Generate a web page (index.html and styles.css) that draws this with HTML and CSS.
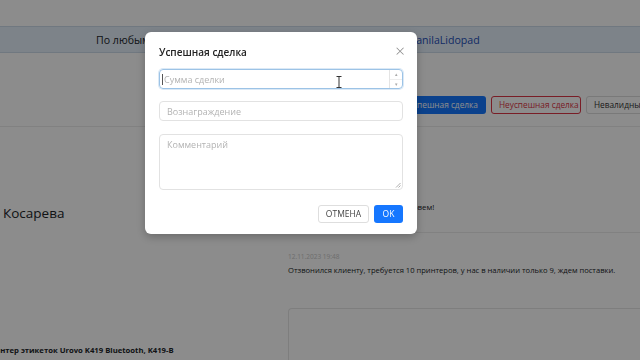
FILE: index.html
```html
<!DOCTYPE html>
<html lang="ru">
<head>
    <meta charset="UTF-8">
    <title>Сделка</title>
    <link rel="stylesheet" href="styles.css">
</head>
<body>
<div class="page">
    <div class="notice">По любым вопросам и предложениям пишите в телеграм <a href="javascript:;">@DanilaLidopad</a></div>
    <div class="actions">
        <a href="javascript:;" class="btn btn-success">Успешная сделка</a>
        <a href="javascript:;" class="btn btn-fail">Неуспешная сделка</a>
        <a href="javascript:;" class="btn btn-invalid">Невалидные</a>
    </div>
    <div class="content">
        <div class="left">
            <h2 class="client">Косарева</h2>
            <div class="product">Принтер этикеток Urovo K419 Bluetooth, K419-B</div>
        </div>
        <div class="right">
            <div class="comment first">
                <div class="comment-text">Договорились о цене, скоро позовем!</div>
            </div>
            <div class="comment">
                <div class="comment-date">12.11.2023 19:48</div>
                <div class="comment-text">Отзвонился клиенту, требуется 10 принтеров, у нас в наличии только 9, ждем поставки.</div>
            </div>
            <div class="comment-box"></div>
        </div>
    </div>
</div>

<div class="overlay">
    <div class="modal">
        <div class="modal-head">
            <span class="modal-title">Успешная сделка</span>
            <span class="close">&times;</span>
        </div>
        <div class="field focused">
            <span class="caret"></span>
            <span class="ph">Сумма сделки</span>
            <span class="spin"><i>&#9652;</i><i>&#9662;</i></span>
            <svg class="ibeam" width="6" height="12" viewBox="0 0 6 12"><path d="M0.5 0.5h5M3 0.5v11M0.5 11.5h5" stroke="#333" stroke-width="1" fill="none"/></svg>
        </div>
        <div class="field">
            <span class="ph">Вознаграждение</span>
        </div>
        <div class="field area">
            <span class="ph">Комментарий</span>
            <svg class="grip" width="6" height="6" viewBox="0 0 6 6"><path d="M5.5 1L1 5.5M5.5 3.5L3.5 5.5" stroke="#999" stroke-width="0.8"/></svg>
        </div>
        <div class="modal-foot">
            <a href="javascript:;" class="mbtn cancel">ОТМЕНА</a>
            <a href="javascript:;" class="mbtn ok">OK</a>
        </div>
    </div>
</div>
</body>
</html>
```

FILE: styles.css
```css
* {
    margin: 0;
    padding: 0;
    box-sizing: border-box;
}

a {
    text-decoration: none;
}

body {
    width: 640px;
    height: 360px;
    overflow: hidden;
    font-family: "Open Sans", "Noto Sans", sans-serif;
    color: #212529;
    background: #fff;
}

.page {
    padding-top: 26px;
}

.notice {
    height: 27px;
    line-height: 26px;
    padding-left: 96px;
    font-size: 10.6px;
    white-space: nowrap;
    background: #e4eef9;
    border-top: 1px solid #cddbe9;
    border-bottom: 1px solid #cddbe9;
}

.notice a {
    color: #1d4fb8;
}

.actions {
    display: flex;
    gap: 5px;
    padding-left: 400px;
    margin-top: 43px;
    height: 18px;
    white-space: nowrap;
}

.btn {
    display: block;
    height: 18px;
    line-height: 16px;
    padding: 0 7px;
    font-size: 8.3px;
    border: 1px solid transparent;
    border-radius: 3px;
}

.btn-success {
    background: #1477ff;
    color: #fff;
    width: 87px;
    text-align: right;
}

.btn-fail {
    color: #dc3545;
    border-color: #dc3545;
    width: 90px;
    text-align: center;
}

.btn-invalid {
    color: #333;
    border-color: #dcdcdc;
    width: 70px;
}

.content {
    display: grid;
    grid-template-columns: 288px 1fr;
    margin-top: 12px;
    border-top: 1px solid #ececec;
}

.left {
    display: flex;
    flex-direction: column;
}

.client {
    font-size: 13.5px;
    font-weight: 400;
    margin-top: 77px;
    padding-left: 3px;
    white-space: nowrap;
}

.product {
    margin-top: 123px;
    font-size: 7.7px;
    font-weight: 700;
    white-space: nowrap;
    text-indent: -16px;
}

.right {
    padding-top: 71px;
}

.comment {
    font-size: 7.6px;
}

.comment.first {
    font-size: 7.9px;
    padding-bottom: 19px;
    border-bottom: 1px solid #ececec;
}

.comment-date {
    margin-top: 19px;
    font-size: 6.5px;
    color: #c8c8c8;
}

.comment-text {
    margin-top: 3px;
    line-height: 12px;
    white-space: nowrap;
}

.comment-box {
    margin-top: 32px;
    height: 80px;
    border: 1px solid #e6e6e6;
    border-right: 0;
    border-radius: 4px 0 0 4px;
}

.overlay {
    position: fixed;
    left: 0;
    top: 0;
    width: 640px;
    height: 360px;
    background: rgba(0, 0, 0, 0.45);
}

.modal {
    position: absolute;
    left: 145px;
    top: 32px;
    width: 272px;
    height: 202px;
    padding: 9px 14px 12px;
    background: #fff;
    border-radius: 6px;
    box-shadow: 0 3px 10px rgba(0, 0, 0, 0.25);
}

.modal-head {
    display: flex;
    justify-content: space-between;
    align-items: center;
    height: 18px;
}

.modal-title {
    font-size: 10px;
    font-weight: 600;
    color: #222;
    margin-top: 3px;
}

.close {
    font-size: 17px;
    font-weight: 300;
    line-height: 1;
    color: #888;
    margin-right: -2px;
}

.field {
    position: relative;
    display: flex;
    align-items: center;
    height: 20px;
    margin-top: 12px;
    padding-left: 7px;
    border: 1px solid #e2e2e2;
    border-radius: 4px;
    font-size: 9px;
}

.field.focused {
    margin-top: 10px;
    padding-left: 2px;
    border-color: #9cc3e6;
    box-shadow: 0 0 0 1px #dbe9f6;
}

.ph {
    color: #b3b3b3;
    flex: 1;
}

.caret {
    width: 1px;
    height: 11px;
    background: #555;
    margin-right: 1px;
}

.spin {
    display: flex;
    flex-direction: column;
    align-self: stretch;
    width: 13px;
    border-left: 1px solid #e4e4e4;
}

.spin i {
    flex: 1;
    font-style: normal;
    font-size: 5px;
    line-height: 9px;
    text-align: center;
    color: #aaa;
}

.spin i + i {
    border-top: 1px solid #eee;
}

.ibeam {
    position: absolute;
    left: 176px;
    top: 6px;
}

.field.area {
    height: 56px;
    margin-top: 13px;
    align-items: flex-start;
    padding-top: 3px;
}

.grip {
    position: absolute;
    right: 1px;
    bottom: 1px;
}

.modal-foot {
    display: flex;
    justify-content: flex-end;
    gap: 5px;
    margin-top: 15px;
}

.mbtn {
    display: block;
    height: 18px;
    line-height: 16px;
    font-size: 8.5px;
    text-align: center;
    border: 1px solid transparent;
    border-radius: 3px;
}

.cancel {
    width: 51px;
    color: #444;
    border-color: #dedede;
}

.ok {
    width: 29px;
    color: #fff;
    background: #1677ff;
}
```
